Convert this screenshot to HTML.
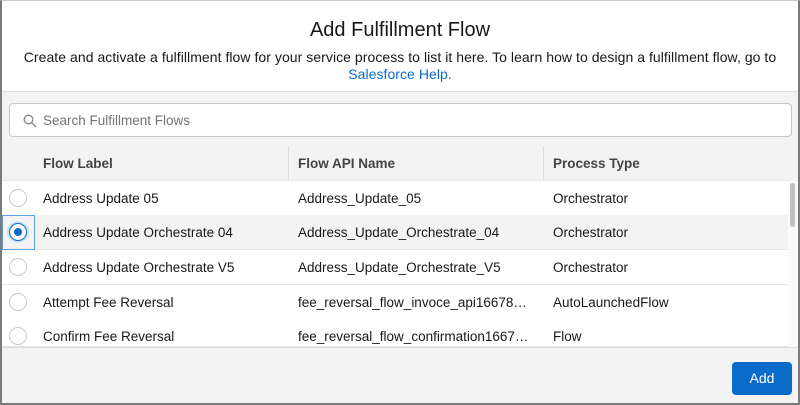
<!DOCTYPE html>
<html><head><style>
*{box-sizing:border-box;margin:0;padding:0}
body{width:800px;height:405px;overflow:hidden;font-family:"Liberation Sans",sans-serif;color:#181818;background:#f3f3f3}
.frame{position:absolute;left:0;top:0;width:800px;height:405px;border:2px solid #7a7a7a;border-top:1px solid #c9c9c9}
.hdr{position:absolute;left:2px;top:1px;width:796px;height:91px;background:#fff;border-bottom:1px solid #ddd;text-align:center}
.hdr h1{font-weight:normal;font-size:20px;margin-top:18px;color:#181818}
.hdr p{font-size:14px;margin-top:7px;line-height:17px;letter-spacing:0.05px}
.hdr a{color:#0b6bcb;text-decoration:none}
.search{position:absolute;left:9px;top:103px;width:783px;height:34px;background:#fff;border:1px solid #c9c9c9;border-radius:4px;font-size:13.5px;color:#747474;padding:9px 0 0 33px}
.search svg{position:absolute;left:13px;top:10px}
.th{position:absolute;top:146px;height:35px;left:2px;width:786px;background:#f3f3f3;border-bottom:1px solid #e5e5e5;font-weight:bold;font-size:13.5px;color:#444}
.th div,.row div{position:absolute;top:10px}
.sep{position:absolute;top:0;width:1px;height:35px;background:#ddd}
.row{position:absolute;left:2px;width:786px;height:35px;background:#fff;border-bottom:1px solid #e5e5e5;font-size:13.5px}
.row.sel{background:#f3f3f3}
.radio{position:absolute;left:7px;top:8px;width:18px;height:18px;border:1px solid #c9c9c9;border-radius:50%;background:#fff}
.scroll{position:absolute;left:788px;top:181px;width:10px;height:166px;background:#fafafa}
.thumb{position:absolute;left:2px;top:2px;width:5px;height:44px;background:#c1c1c1;border-radius:3px}
.btn{position:absolute;left:732px;top:362px;width:60px;height:33px;background:#0b6bcb;color:#fff;border-radius:4px;font-size:14px;text-align:center;line-height:33px}
</style></head><body>
<div class="hdr"><h1>Add Fulfillment Flow</h1><p>Create and activate a fulfillment flow for your service process to list it here. To learn how to design a fulfillment flow, go to<br><a>Salesforce Help.</a></p></div>
<div class="search"><svg width="14" height="14" viewBox="0 0 14 14"><circle cx="5.5" cy="5.5" r="4.3" fill="none" stroke="#888" stroke-width="1.3"/><path d="M8.6 8.6L13 13" stroke="#888" stroke-width="1.4"/></svg>Search Fulfillment Flows</div>
<div class="th"><div style="left:41px">Flow Label</div><span class="sep" style="left:286px"></span><div style="left:296px">Flow API Name</div><span class="sep" style="left:541px"></span><div style="left:551px">Process Type</div></div>
<div class="row" style="top:181px"><span class="radio"></span><div style="left:41px">Address Update 05</div><div style="left:296px">Address_Update_05</div><div style="left:551px">Orchestrator</div></div>
<div class="row sel" style="top:215px"><span style="position:absolute;left:0;top:0;width:33px;height:35px;border:1px solid #5a9ee6"></span><span class="radio" style="border-color:#0b6bcb;box-shadow:0 0 0 2px #cde1f7"><span style="position:absolute;left:4px;top:4px;width:8px;height:8px;border-radius:50%;background:#0b6bcb"></span></span><div style="left:41px">Address Update Orchestrate 04</div><div style="left:296px">Address_Update_Orchestrate_04</div><div style="left:551px">Orchestrator</div></div>
<div class="row" style="top:250px"><span class="radio"></span><div style="left:41px">Address Update Orchestrate V5</div><div style="left:296px">Address_Update_Orchestrate_V5</div><div style="left:551px">Orchestrator</div></div>
<div class="row" style="top:285px"><span class="radio"></span><div style="left:41px">Attempt Fee Reversal</div><div style="left:296px">fee_reversal_flow_invoce_api16678…</div><div style="left:551px">AutoLaunchedFlow</div></div>
<div class="row" style="top:319px;height:28px;overflow:hidden"><span class="radio"></span><div style="left:41px">Confirm Fee Reversal</div><div style="left:296px">fee_reversal_flow_confirmation1667…</div><div style="left:551px">Flow</div></div>
<div class="scroll"><div class="thumb"></div></div>
<div style="position:absolute;left:2px;top:347px;width:796px;height:1px;background:#ddd"></div>
<div class="btn">Add</div>
<div class="frame"></div>
</body></html>
